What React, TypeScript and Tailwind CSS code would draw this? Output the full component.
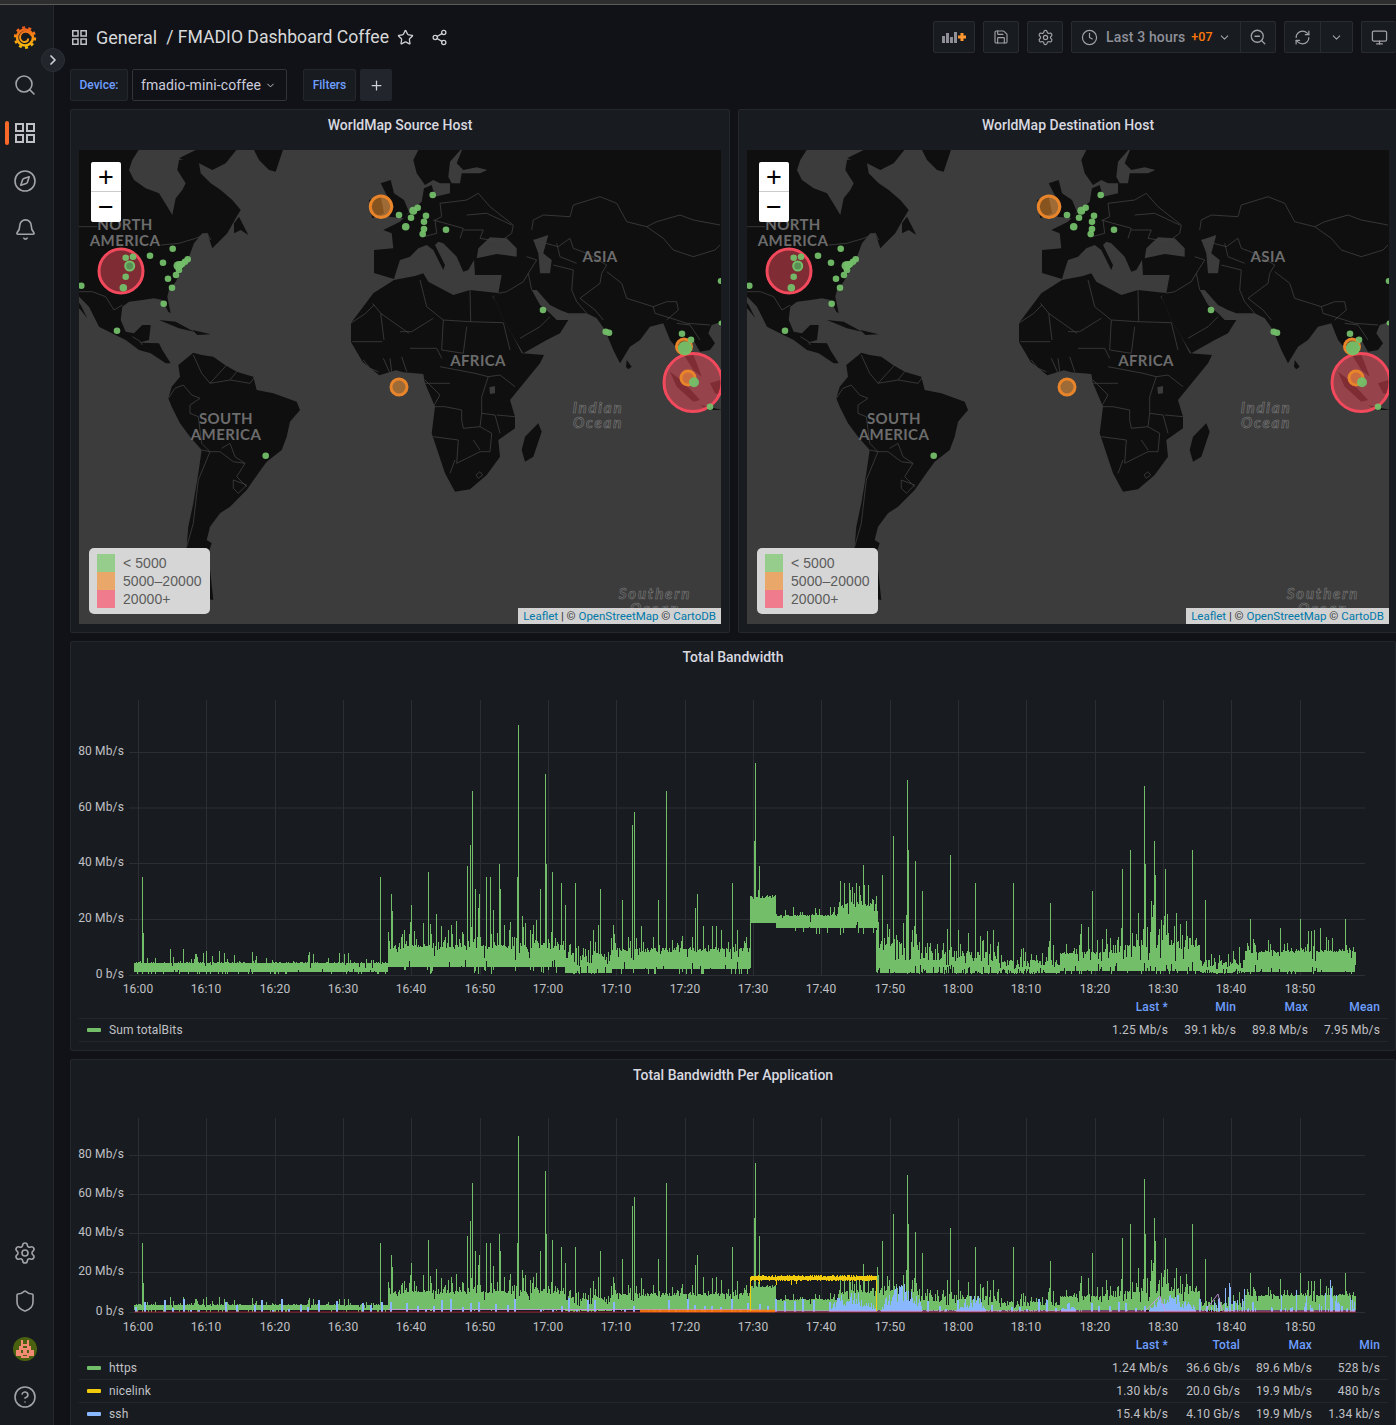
import {
  Bell,
  ChevronDown,
  ChevronRight,
  CircleHelp,
  Clock,
  Compass,
  Monitor,
  Plus,
  RefreshCw,
  Save,
  Search,
  Settings,
  Share2,
  Shield,
  Star,
  ZoomOut,
} from "lucide-react";

type Pt = [number, number];

// crops of the map were read at 3x, so every shape stays in crop coordinates
const pts = (ox: number, oy: number, list: Pt[]) =>
  list.map(([x, y]) => `${(ox + x / 3).toFixed(1)},${(oy + y / 3).toFixed(1)}`).join(" ");

const LAND: string[] = [
  // north america
  pts(79, 150, [[-10, -10], [185, -10], [160, 30], [150, 60], [165, 90], [200, 115], [240, 130], [262, 165], [280, 195], [290, 145], [310, 120], [320, 100], [295, 60], [300, 30], [330, 25], [360, 40], [365, 70], [395, 100], [425, 120], [460, 150], [485, 180], [470, 205], [445, 250], [400, 295], [385, 250], [370, 250], [345, 280], [330, 320], [320, 345], [305, 365], [290, 395], [270, 420], [265, 440], [275, 490], [268, 485], [250, 450], [225, 445], [190, 450], [150, 455], [130, 470], [125, 510], [140, 545], [165, 550], [190, 525], [215, 525], [210, 570], [180, 578], [240, 580], [250, 600], [275, 640], [260, 640], [215, 610], [180, 600], [140, 570], [90, 545], [60, 530], [30, 470], [-10, 430]]),
  pts(79, 150, [[-10, 445], [5, 465], [25, 505], [5, 480], [-10, 465]]),
  pts(79, 150, [[300, 25], [350, 0], [420, -10], [480, -10], [440, 40], [400, 60], [360, 40]]),
  pts(79, 150, [[520, -10], [615, -10], [590, 65], [570, 60], [540, 30]]),
  pts(79, 150, [[465, 220], [480, 200], [508, 255], [485, 240], [465, 250]]),
  pts(79, 150, [[240, 510], [290, 515], [345, 545], [300, 535]]),
  pts(79, 150, [[340, 540], [395, 553], [355, 555]]),
  pts(79, 150, [[905, 100], [935, 90], [945, 130], [975, 150], [990, 185], [975, 205], [930, 200], [945, 170], [920, 130]]),
  pts(79, 150, [[870, 150], [905, 140], [915, 190], [880, 205]]),
  // south america
  pts(130, 340, [[145, 75], [190, 38], [215, 45], [250, 50], [285, 75], [320, 95], [370, 110], [380, 150], [430, 160], [500, 185], [510, 210], [480, 245], [470, 290], [455, 330], [410, 365], [385, 400], [350, 450], [320, 480], [300, 500], [270, 520], [240, 560], [230, 600], [245, 610], [235, 640], [250, 780], [200, 770], [165, 680], [175, 560], [190, 490], [205, 400], [215, 330], [180, 290], [150, 250], [125, 200], [115, 175], [125, 140], [150, 110]]),
  // africa
  pts(400, 300, [[-18, -60], [-80, -20], [-147, 69], [-147, 126], [-112, 186], [-62, 226], [-12, 211], [10, 217], [70, 222], [75, 250], [105, 320], [95, 400], [135, 520], [165, 575], [210, 568], [260, 525], [300, 470], [295, 420], [345, 385], [345, 350], [330, 300], [420, 190], [432, 165], [365, 160], [340, 110], [310, 60], [285, 0], [277, -10], [300, -20], [210, -30], [160, -15], [85, -55], [70, -80], [45, -72]]),
  pts(400, 300, [[415, 370], [425, 395], [400, 470], [375, 485], [365, 450], [375, 410]]),
  // eurasia
  pts(400, 150, [[60, -10], [1000, -10], [1000, 520], [965, 515], [935, 525], [925, 550], [945, 580], [930, 600], [900, 605], [880, 570], [870, 590], [890, 640], [905, 680], [880, 660], [855, 620], [835, 600], [810, 570], [790, 520], [750, 530], [720, 570], [690, 590], [660, 640], [640, 600], [615, 540], [590, 505], [560, 490], [505, 490], [480, 480], [450, 465], [410, 420], [395, 420], [420, 465], [450, 490], [470, 510], [505, 510], [480, 550], [440, 570], [370, 610], [340, 560], [310, 510], [285, 450], [280, 440], [295, 430], [305, 375], [225, 375], [222, 330], [205, 360], [190, 365], [170, 320], [130, 280], [115, 275], [105, 285], [135, 345], [130, 360], [100, 300], [80, 285], [55, 295], [30, 320], [0, 330], [-10, 360], [-18, 387], [-78, 369], [-78, 300], [-20, 295], [-25, 250], [-50, 240], [0, 215], [30, 185], [65, 155], [72, 115], [95, 105], [105, 140], [150, 130], [150, 100], [120, 100], [100, 90], [75, 105], [50, 70], [40, 30]]),
  pts(400, 150, [[680, 630], [695, 650], [685, 658], [678, 650]]),
  pts(400, 300, [[810, 215], [850, 245], [900, 300], [880, 305], [830, 260]]),
  pts(400, 300, [[900, 315], [965, 330], [925, 330]]),
  pts(400, 300, [[930, 250], [990, 230], [990, 290], [945, 280]]),
  pts(400, 150, [[885, 190], [935, 135], [915, 180]]),
];

const WATER: string[] = [
  pts(400, 150, [[235, 295], [270, 262], [320, 265], [350, 295], [350, 320], [290, 312], [230, 325]]),
  pts(400, 150, [[400, 270], [445, 255], [430, 310], [455, 330], [450, 370], [420, 370], [415, 310]]),
  pts(400, 150, [[190, -10], [150, 35], [145, 80], [155, 100], [180, 100], [185, 70], [240, 70], [262, 60], [230, 52], [190, 60], [170, 40]]),
  pts(400, 300, [[268, 262], [285, 258], [285, 280], [270, 282]]),
];

const BORDERS: string[] = [
  pts(79, 150, [[0, 230], [55, 230]]),
  pts(79, 150, [[245, 285], [300, 280], [350, 265], [385, 250], [395, 270]]),
  pts(79, 150, [[0, 425], [40, 425], [80, 440], [105, 480], [130, 465]]),
  pts(79, 150, [[160, 560], [185, 575], [190, 585]]),
  pts(79, 150, [[880, 460], [885, 465], [905, 490], [915, 570]]),
  pts(79, 150, [[815, 520], [860, 490], [885, 465]]),
  pts(79, 150, [[905, 490], [990, 550]]),
  pts(79, 150, [[820, 575], [910, 575]]),
  pts(400, 150, [[120, 160], [125, 200], [105, 210], [110, 250], [65, 262]]),
  pts(400, 150, [[120, 160], [200, 150], [235, 130], [270, 170], [340, 225], [335, 250], [300, 275], [240, 265]]),
  pts(400, 150, [[200, 195], [260, 190], [335, 225]]),
  pts(400, 150, [[190, 240], [250, 240], [240, 265]]),
  pts(400, 150, [[100, 210], [190, 235], [180, 265]]),
  pts(400, 150, [[395, 240], [400, 210], [430, 195], [510, 200], [520, 165], [600, 140], [650, 160], [680, 215], [740, 230]]),
  pts(400, 150, [[740, 230], [770, 215], [840, 195], [880, 210], [960, 225]]),
  pts(400, 150, [[740, 230], [790, 265], [820, 300], [880, 320], [945, 300], [960, 285]]),
  pts(400, 150, [[400, 270], [475, 290], [510, 265], [520, 295], [560, 310], [620, 345], [605, 370]]),
  pts(400, 150, [[470, 280], [480, 320], [530, 340]]),
  pts(400, 150, [[380, 320], [410, 330], [385, 370], [395, 420]]),
  pts(400, 150, [[460, 345], [520, 360], [515, 420], [530, 455], [560, 490]]),
  pts(400, 150, [[605, 370], [600, 400], [540, 445], [585, 480], [610, 510]]),
  pts(400, 150, [[620, 365], [665, 400], [680, 445], [760, 470], [800, 455], [830, 455], [835, 480], [800, 510]]),
  pts(400, 150, [[760, 470], [765, 490], [830, 510], [860, 520], [930, 525]]),
  pts(400, 150, [[830, 520], [870, 525], [900, 570]]),
  pts(400, 150, [[295, 430], [320, 425], [370, 395], [385, 370]]),
  pts(400, 150, [[360, 565], [420, 530], [450, 500]]),
  pts(400, 150, [[60, 390], [80, 470], [130, 510], [210, 515], [310, 518], [330, 600]]),
  pts(400, 150, [[210, 420], [212, 515]]),
  pts(400, 150, [[100, 505], [35, 545], [0, 545]]),
  pts(400, 150, [[130, 510], [125, 600], [190, 610], [200, 530]]),
  pts(400, 300, [[100, 320], [135, 320], [185, 330], [185, 360], [190, 385], [240, 380], [245, 340], [245, 290], [265, 230], [300, 225], [345, 260]]),
  pts(400, 300, [[100, 410], [175, 420], [170, 490], [240, 455], [270, 455], [275, 400], [240, 380]]),
  pts(400, 300, [[245, 340], [285, 345], [300, 400]]),
  pts(400, 300, [[345, 350], [290, 345]]),
  pts(400, 300, [[220, 420], [240, 450]]),
  pts(400, 300, [[120, 200], [225, 220], [265, 230]]),
  pts(400, 300, [[75, 240], [120, 285], [100, 320]]),
  pts(400, 300, [[150, 520], [165, 480]]),
  pts(400, 300, [[228, 525], [240, 515], [248, 525], [235, 535], [228, 525]]),
  pts(130, 340, [[190, 45], [215, 100], [240, 130], [290, 75]]),
  pts(130, 340, [[240, 130], [300, 120], [320, 95]]),
  pts(130, 340, [[300, 120], [360, 130], [375, 110]]),
  pts(130, 340, [[115, 175], [135, 145], [160, 135], [185, 165], [210, 175], [180, 195], [180, 220], [205, 230], [215, 310], [240, 335]]),
  pts(130, 340, [[215, 330], [240, 335], [270, 335], [310, 365], [345, 370], [320, 410], [350, 440]]),
  pts(130, 340, [[275, 325], [300, 310], [315, 350], [345, 370]]),
  pts(130, 340, [[310, 420], [350, 435], [325, 460], [310, 445], [310, 420]]),
  pts(130, 340, [[240, 335], [205, 420], [190, 550], [170, 620]]),
  pts(130, 340, [[700, 60], [720, 85], [745, 95]]),
  pts(130, 340, [[760, 55], [780, 100]]),
  pts(130, 340, [[780, 55], [785, 95]]),
  pts(130, 340, [[815, 50], [830, 95]]),
  pts(130, 340, [[840, 25], [920, 25], [935, 55]]),
  pts(130, 340, [[885, 130], [960, 130]]),
];

// [x, y, r]
const DOTS: number[][] = [
  [172.7, 248.7, 3.3], [150, 255.7, 3.3], [125.7, 257.7, 3.3], [133, 256.7, 3.3], [163, 262.7, 3.3],
  [125.7, 276.7, 3.3], [123.3, 287.7, 3.8], [168, 278.7, 3.3], [172, 287.7, 3.3], [163.7, 303.7, 3.3],
  [176, 275, 3.3], [178, 265.7, 4.5], [180, 265, 4], [182.3, 264, 3.3], [185, 261.7, 3.3], [187.7, 259.3, 3.3],
  [179, 270, 3.3], [81.3, 285.7, 3.3], [117, 330.7, 3.3], [399, 215, 3.3], [432.7, 195, 3.3], [417.7, 207.7, 3.3],
  [413.3, 210.7, 4], [411, 217.7, 3.3], [405.7, 226.7, 3.8], [426, 215.7, 3.3], [424, 221.7, 3.3], [424, 229, 3.3],
  [422.7, 234, 3.3], [446, 229.7, 3.3], [543, 310, 3.3], [605.7, 331.7, 3.3], [609, 332.7, 3.3], [682, 333.7, 3.3],
  [691, 339.7, 3.3], [685, 348.3, 7], [694, 382.3, 5], [710, 406.7, 3.3], [265.7, 455.7, 3.3], [720.7, 281, 3],
  [721, 323, 2.5],
];

const Land = () => (
  <>
    {LAND.map((p, i) => (
      <polygon key={i} points={p} fill="#0f0f0f" />
    ))}
    {WATER.map((p, i) => (
      <polygon key={i} points={p} fill="#3c3c3c" />
    ))}
    {BORDERS.map((p, i) => (
      <polyline key={i} points={p} fill="none" stroke="#404040" strokeWidth="0.8" />
    ))}
  </>
);

function WorldMap() {
  const label = { fontFamily: "Lato, sans-serif", fontWeight: 700, fontSize: 15, fill: "#6c6c6c", textAnchor: "middle" as const, letterSpacing: 0.4 };
  const ocean = { fontFamily: "Lato, sans-serif", fontStyle: "italic", fontWeight: 700, fontSize: 15, fill: "#3c3c3c", stroke: "#7a7a7a", strokeWidth: 0.6, textAnchor: "middle" as const, letterSpacing: 1.8 };
  return (
    <div className="relative h-[474px] w-[642px] overflow-hidden bg-[#3c3c3c]">
      <svg viewBox="79 150 642 474" className="block h-[474px] w-[642px]">
        <Land />
        <text x="125" y="230" {...label}>NORTH</text>
        <text x="125" y="246" {...label}>AMERICA</text>
        <text x="600" y="262" {...label}>ASIA</text>
        <text x="478" y="366" {...label}>AFRICA</text>
        <text x="226" y="424" {...label}>SOUTH</text>
        <text x="226" y="440" {...label}>AMERICA</text>
        <text x="598" y="413" {...ocean}>Indian</text>
        <text x="598" y="428" {...ocean}>Ocean</text>
        <text x="655" y="599" {...ocean}>Southern</text>
        <text x="655" y="614" {...ocean}>Ocean</text>

        <circle cx="121" cy="271" r="22" fill="#f2495c" fillOpacity="0.5" stroke="#f2495c" strokeWidth="3" />
        <circle cx="693" cy="382.5" r="29" fill="#f2495c" fillOpacity="0.5" stroke="#f2495c" strokeWidth="3" />
        <circle cx="381" cy="206.7" r="10.7" fill="#ff9830" fillOpacity="0.5" stroke="#e8842a" strokeWidth="3" />
        <circle cx="399" cy="387" r="8" fill="#ff9830" fillOpacity="0.5" stroke="#e8842a" strokeWidth="3" />
        <circle cx="684" cy="346.5" r="7.5" fill="#ff9830" fillOpacity="0.5" stroke="#e8842a" strokeWidth="3" />
        <circle cx="688" cy="378" r="7" fill="#ff9830" fillOpacity="0.5" stroke="#e8842a" strokeWidth="3" />
        {DOTS.map(([x, y, r], i) => (
          <circle key={i} cx={x} cy={y} r={r} fill="#73bf69" fillOpacity="0.95" />
        ))}
        <circle cx="129.7" cy="266" r="4.5" fill="#5a8f54" stroke="#73bf69" strokeWidth="2" />
      </svg>

      <div className="absolute left-[12px] top-[12px] w-[30px] overflow-hidden rounded-[2px] bg-white text-black">
        <div className="flex h-[30px] items-center justify-center border-b border-[#cccccc] pt-[1px] font-['Liberation_Sans',sans-serif] text-[27px] leading-none">+</div>
        <div className="flex h-[30px] items-center justify-center pt-[1px] font-['Liberation_Sans',sans-serif] text-[27px] leading-none">−</div>
      </div>

      <div className="absolute bottom-[10px] left-[10px] w-[121px] rounded-[5px] bg-[#d6d6d6] px-[8px] py-[6px] font-['Liberation_Sans',sans-serif] text-[14px] leading-[18px] tracking-[0.08px] text-[#5c5c5c]">
        <div className="flex"><i className="mr-[8px] h-[18px] w-[18px] bg-[#96cc8c]" />&lt; 5000</div>
        <div className="flex"><i className="mr-[8px] h-[18px] w-[18px] bg-[#e9a86a]" />5000–20000</div>
        <div className="flex"><i className="mr-[8px] h-[18px] w-[18px] bg-[#f07b8c]" />20000+</div>
      </div>

      <div className="absolute bottom-0 right-0 h-[16px] bg-[#d2d2d2] px-[5px] font-['Roboto',sans-serif] text-[11.5px] leading-[17px] text-[#333333]">
        <span className="text-[#0078a8]">Leaflet</span> | © <span className="text-[#0078a8]">OpenStreetMap</span> © <span className="text-[#0078a8]">CartoDB</span>
      </div>
    </div>
  );
}

/* chart data */

let seed = 48271;
const rnd = () => {
  seed = (seed * 16807) % 2147483647;
  return seed / 2147483647;
};

const SPIKES: Pt[] = [
  [142, 35], [143, 15], [380, 35], [391, 29], [392, 23], [411, 25], [428, 37], [467, 39], [470, 46.6], [472, 66], [475, 31], [479, 29],
  [486, 35], [490, 35], [499, 40], [500, 31], [518, 89.8], [517, 35], [540, 31], [545, 72], [546, 40], [552, 37], [561, 33], [565, 25],
  [575, 33], [600, 31], [622, 27], [632, 54], [634, 58.5], [658, 27], [666, 66], [697, 29], [695, 24], [732, 33], [755, 76], [754, 48], [759, 39],
  [882, 36], [893, 50], [907, 70], [908, 45], [915, 41], [922, 30], [950, 43], [975, 33], [1013, 33], [1050, 26], [1092, 30], [1122, 38],
  [1130, 45], [1144, 68], [1145, 40], [1154, 48], [1155, 36], [1165, 38], [1192, 45], [1205, 27], [1250, 20], [1280, 17], [1300, 20], [1320, 17], [1345, 20],
];

// notch: how often a column falls short of the band, leaving a dark gap
type Band = { from: number; to: number; lo: number; hi: number; jitter: number; chance: number; top: number; notch: number };

const BANDS: Band[] = [
  { from: 134, to: 388, lo: 1.2, hi: 4.4, jitter: 0.4, chance: 0.2, top: 10, notch: 0.05 },
  { from: 388, to: 565, lo: 3, hi: 10, jitter: 2, chance: 0.5, top: 26, notch: 0.06 },
  { from: 565, to: 612, lo: 0.9, hi: 7, jitter: 2, chance: 0.45, top: 20, notch: 0.25 },
  { from: 612, to: 750, lo: 2, hi: 9, jitter: 1.5, chance: 0.45, top: 20, notch: 0.08 },
  { from: 750, to: 776, lo: 18.5, hi: 28, jitter: 1.2, chance: 0.2, top: 34, notch: 0.02 },
  { from: 776, to: 838, lo: 17, hi: 21.5, jitter: 0.6, chance: 0.25, top: 27, notch: 0.02 },
  { from: 838, to: 877, lo: 17, hi: 25, jitter: 2, chance: 0.65, top: 43, notch: 0.04 },
  { from: 877, to: 920, lo: 0.6, hi: 10, jitter: 2.5, chance: 0.55, top: 28, notch: 0.2 },
  { from: 920, to: 1000, lo: 0.7, hi: 8, jitter: 1.5, chance: 0.4, top: 20, notch: 0.35 },
  { from: 1000, to: 1060, lo: 0.6, hi: 5, jitter: 1.2, chance: 0.3, top: 15, notch: 0.35 },
  { from: 1060, to: 1120, lo: 1.6, hi: 8, jitter: 1.2, chance: 0.4, top: 22, notch: 0.1 },
  { from: 1120, to: 1200, lo: 1.6, hi: 10, jitter: 2, chance: 0.6, top: 32, notch: 0.12 },
  { from: 1200, to: 1245, lo: 0.7, hi: 5, jitter: 1.2, chance: 0.3, top: 13, notch: 0.3 },
  { from: 1245, to: 1356, lo: 1.2, hi: 8.5, jitter: 1, chance: 0.35, top: 18, notch: 0.08 },
];

const COLUMNS = BANDS.flatMap((b) => {
  const out: { x: number; lo: number; hi: number }[] = [];
  for (let x = b.from; x < b.to; x++) {
    let lo = b.lo;
    let hi = b.hi + (rnd() - 0.5) * b.jitter;
    const roll = rnd();
    if (roll < 0.1) lo = Math.max(0.2, b.lo - 1 - rnd() * 1.5);
    else if (roll < 0.1 + b.notch) lo = b.lo + (b.hi - b.lo) * 0.4 * rnd();
    const top = rnd();
    if (top < b.chance) hi = b.hi + rnd() * rnd() * (b.top - b.hi);
    else if (top > 1 - b.notch) hi = lo + (hi - lo) * (0.4 + rnd() * 0.4);
    out.push({ x, lo, hi });
  }
  return out;
});
SPIKES.forEach(([x, v]) => {
  const c = COLUMNS.find((col) => col.x === x);
  if (c) c.hi = v;
});

const TOTAL_PATH =
  COLUMNS.map((c) => `M${c.x + 0.5} ${(975 - c.lo * 2.7875).toFixed(1)}V${(975 - c.hi * 2.7875).toFixed(1)}`).join("") +
  "M750.5 968V905M876.5 930V972";

const HTTPS_PATH = COLUMNS.map((c) => {
  const stepped = c.x >= 750 && c.x < 877;
  const isHard = SPIKES.some(([x]) => x === c.x);
  const hi = isHard ? c.hi : stepped ? Math.max(3, c.hi - 15) : c.x < 388 ? c.hi * 0.85 : c.hi;
  const lo = stepped ? 0.6 : Math.min(c.lo, 1.6) * 0.8;
  return `M${c.x + 0.5} ${(1312 - lo * 1.96).toFixed(1)}V${(1312 - hi * 1.96).toFixed(1)}`;
}).join("");

const blueHumps: number[][] = [
  [830, 877, 850, 11], [880, 922, 905, 14.6], [955, 986, 975, 8.6], [1060, 1076, 1068, 5], [1148, 1196, 1170, 10],
];
let bluePath = "";
let blueTicks = "";
for (let x = 134; x < 1356; x++) {
  const hump = blueHumps.find(([a, b]) => x >= a && x < b);
  if (hump) {
    const [a, b, peak, h] = hump;
    const d = x < peak ? (x - a) / (peak - a) : (b - x) / (b - peak);
    const v = h * Math.sqrt(d) * (0.3 + rnd() * 0.8);
    bluePath += `M${x + 0.5} 1311.5V${(1312 - v * 1.96).toFixed(1)}`;
  } else if (x >= 1210 && rnd() < 0.3) {
    const v = 1.5 + rnd() * rnd() * 17;
    bluePath += `M${x + 0.5} 1311.5V${(1312 - v * 1.96).toFixed(1)}`;
  } else if (x % 9 === 0 && rnd() < 0.8) {
    const v = 1 + rnd() * 6;
    blueTicks += `M${x + Math.floor(rnd() * 4) + 0.5} 1311.5V${(1312 - v * 1.96).toFixed(1)}`;
  }
}

let yellowPath = "M750.5 1311V1278M876.5 1311V1278";
for (let x = 750; x < 877; x++) {
  const a = 1275 + rnd() * 1.6;
  const b = 1279.5 + rnd() * 1.6 + (rnd() < 0.03 ? 4 : 0);
  yellowPath += `M${x + 0.5} ${a.toFixed(1)}V${b.toFixed(1)}`;
}

const TIME_LABELS = ["16:00", "16:10", "16:20", "16:30", "16:40", "16:50", "17:00", "17:10", "17:20", "17:30", "17:40", "17:50", "18:00", "18:10", "18:20", "18:30", "18:40", "18:50"];
const axisText = { fontFamily: "Roboto, sans-serif", fontSize: 12, fill: "#c0c1c6", letterSpacing: 0.15 };

function Axes({ top, rows, labelY }: { top: number; rows: { y: number; text: string }[]; labelY: number }) {
  const bottom = rows[rows.length - 1].y;
  return (
    <>
      {TIME_LABELS.map((t, i) => {
        const x = Math.round(138 + i * 68.33) + 0.5;
        return (
          <g key={t}>
            <line x1={x} x2={x} y1={top} y2={bottom} stroke="#2b2e33" />
            <text x={x - 0.5} y={labelY} textAnchor="middle" {...axisText}>{t}</text>
          </g>
        );
      })}
      {rows.map((r) => (
        <g key={r.text}>
          <line x1="129" x2="1365" y1={r.y + 0.5} y2={r.y + 0.5} stroke="#2b2e33" />
          <text x="124" y={r.y + 3} textAnchor="end" {...axisText}>{r.text}</text>
        </g>
      ))}
    </>
  );
}

function TotalChart() {
  return (
    <svg viewBox="71 674 1324 324" className="block h-[324px] w-[1324px]">
      <Axes
        top={700}
        labelY={993}
        rows={[
          { y: 752, text: "80 Mb/s" },
          { y: 807.5, text: "60 Mb/s" },
          { y: 863, text: "40 Mb/s" },
          { y: 919, text: "20 Mb/s" },
          { y: 975, text: "0 b/s" },
        ]}
      />
      <path d={TOTAL_PATH} stroke="#73bf69" strokeWidth="1" fill="none" shapeRendering="crispEdges" />
    </svg>
  );
}

function AppChart() {
  return (
    <svg viewBox="71 1092 1324 244" className="block h-[244px] w-[1324px]">
      <Axes
        top={1118}
        labelY={1331}
        rows={[
          { y: 1155, text: "80 Mb/s" },
          { y: 1194, text: "60 Mb/s" },
          { y: 1233, text: "40 Mb/s" },
          { y: 1272, text: "20 Mb/s" },
          { y: 1312, text: "0 b/s" },
        ]}
      />
      <path d={HTTPS_PATH} stroke="#73bf69" strokeWidth="1" fill="none" shapeRendering="crispEdges" />
      <path d={blueTicks} stroke="#8ab8ff" strokeWidth="2" fill="none" shapeRendering="crispEdges" />
      <path d={bluePath} stroke="#8ab8ff" strokeWidth="1" fill="none" shapeRendering="crispEdges" />
      <path d="M388 1309.5H750L776 1311H1145L1160 1296L1165 1311H1205L1218 1294L1222 1311H1356" stroke="#ca95e5" strokeWidth="1" fill="none" opacity="0.85" />
      <path d="M134 1312H1356" stroke="#c4162a" strokeWidth="1" opacity="0.7" />
      <path d="M640 1311H775" stroke="#ff780a" strokeWidth="2.5" opacity="0.9" />
      <path d={yellowPath} stroke="#f2cc0c" strokeWidth="1" fill="none" shapeRendering="crispEdges" />
    </svg>
  );
}

function LegendRow({ name, color, cells, widths, head }: { name?: string; color?: string; cells: string[]; widths: string[]; head?: boolean }) {
  return (
    <div className={head ? "flex h-[21px] items-center border-b border-[#24272c] pb-[2px] pr-[8px] text-[12px] font-medium tracking-[0.15px] text-[#6e9fff]" : "flex h-[23px] items-center border-b border-[#24272c] pr-[8px] text-[12px] tracking-[0.15px] text-[#c0c1c6]"}>
      <div className="flex flex-1 items-center">
        {name && <i className={`ml-[8px] mr-[8px] h-[4px] w-[14px] rounded-[1px] ${color}`} />}
        {name}
      </div>
      {cells.map((c, i) => (
        <div key={i} className={`${widths[i]} text-right`}>{c}</div>
      ))}
    </div>
  );
}

const PanelTitle = ({ children }: { children: string }) => (
  <div className="mb-[2px] flex h-[30px] items-center justify-center text-[14px] font-medium text-[#d8d9e0]">{children}</div>
);

const Grid4 = ({ className }: { className: string }) => (
  <svg viewBox="0 0 20 20" className={className} fill="none" stroke="currentColor" strokeWidth="2">
    <rect x="1" y="1" width="7" height="7" />
    <rect x="12" y="1" width="7" height="7" />
    <rect x="1" y="12" width="7" height="7" />
    <rect x="12" y="12" width="7" height="7" />
  </svg>
);

const GrafanaLogo = () => (
  <svg viewBox="0 0 24 24" className="h-[24px] w-[24px]" fill="none">
    <defs>
      <linearGradient id="gf" x1="0" y1="24" x2="0" y2="0" gradientUnits="userSpaceOnUse">
        <stop offset="0" stopColor="#fbca0a" />
        <stop offset="1" stopColor="#f0501f" />
      </linearGradient>
    </defs>
    <circle cx="12" cy="12.5" r="10" stroke="url(#gf)" strokeWidth="2.4" strokeDasharray="3 3.28" />
    <circle cx="12" cy="12.5" r="8" stroke="url(#gf)" strokeWidth="2.6" />
    <path d="M19 11c-1.500-3-4-4.600-7-4.300a5.800 5.800 0 0 0-5 5.800 5 5 0 0 0 5 4.500 3.400 3.400 0 0 0 3.200-3.400" stroke="url(#gf)" strokeWidth="2" />
  </svg>
);

const Avatar = () => (
  <svg viewBox="0 0 24 24" className="h-[24px] w-[24px] rounded-full" shapeRendering="crispEdges">
    <rect width="24" height="24" fill="#4a610f" />
    <path d="M8 3h2v4h4V3h2v6h2v4h3v6h-5v2H8v-2H3v-6h3V9h2z" fill="#f38a73" />
    <path d="M10 9h4v2h-4zM8 13h2v3H8zM14 13h2v3h-2zM10 18h4v1h-4z" fill="#4a610f" />
  </svg>
);

const NavItem = ({ children }: { children: React.ReactNode }) => (
  <div className="relative flex h-[48px] items-center justify-center pr-[3px] text-[#a3a4a9]">{children}</div>
);

const btn = "flex h-[32px] items-center justify-center rounded-[2px] border border-[#282b30] bg-[#181b1f] text-[#a0a1a8]";

export default function App() {
  return (
    <div className="h-[1425px] w-[1396px] overflow-hidden bg-[#111217] font-['Roboto',sans-serif] text-[#ccccdc]">
      <div className="h-[5px] border-b border-[#5b5b5b] bg-[#2e2e2e]" />
      <div className="flex">
        <aside className="relative flex h-[1420px] w-[54px] shrink-0 flex-col border-r border-[#24272b] bg-[#181b1f]">
          <div className="flex h-[56px] items-start justify-center pr-[3px] pt-[20px]">
            <GrafanaLogo />
          </div>
          <NavItem><Search className="h-[24px] w-[24px]" strokeWidth={1.6} /></NavItem>
          <NavItem>
            <span className="absolute left-[5px] top-[12px] h-[24px] w-[4px] rounded-[2px] bg-[#f8692a]" />
            <Grid4 className="h-[20px] w-[20px] text-[#c0c1c6]" />
          </NavItem>
          <NavItem><Compass className="h-[24px] w-[24px]" strokeWidth={1.6} /></NavItem>
          <NavItem><Bell className="h-[23px] w-[23px]" strokeWidth={1.7} /></NavItem>
          <div className="mt-auto pb-[4px]">
            <NavItem><Settings className="h-[24px] w-[24px]" strokeWidth={1.6} /></NavItem>
            <NavItem><Shield className="h-[24px] w-[24px]" strokeWidth={1.6} /></NavItem>
            <NavItem><Avatar /></NavItem>
            <NavItem><CircleHelp className="h-[24px] w-[24px]" strokeWidth={1.6} /></NavItem>
          </div>
          <div className="absolute left-[41px] top-[43px] z-10 flex h-[24px] w-[24px] items-center justify-center rounded-full border border-[#2c2f35] bg-[#22252b] text-[#d0d1d6]">
            <ChevronRight className="h-[16px] w-[16px]" strokeWidth={2.6} />
          </div>
        </aside>

        <main className="min-w-0 flex-1 pl-[16px]">
          <header className="flex h-[48px] items-start pt-[16px]">
            <div className="flex h-[32px] items-center">
              <Grid4 className="ml-[2px] h-[15px] w-[15px] text-[#c0c1c6]" />
              <span className="ml-[9px] text-[18px] text-[#d8d9da]">General</span>
              <span className="ml-[9px] text-[17.6px] text-[#d8d9da]">/ FMADIO Dashboard Coffee</span>
              <Star className="ml-[8px] h-[17px] w-[17px] text-[#d0d1d6]" strokeWidth={1.8} />
              <Share2 className="ml-[17px] h-[17px] w-[17px] text-[#d0d1d6]" strokeWidth={1.8} />
            </div>
            <div className="ml-auto flex shrink-0 gap-[8px]">
              <div className={`${btn} w-[42px]`}>
                <svg viewBox="0 0 24 12" className="h-[12px] w-[24px]">
                  <path d="M0 5h3v7H0zM4 2h3v10H4zM8 6h3v6H8zM12 1h3v11h-3z" fill="#8f9097" />
                  <path d="M18.500 2h3v2.500H24v3h-2.500V10h-3V7.500H16v-3h2.500z" fill="#ff9830" />
                </svg>
              </div>
              <div className={`${btn} w-[36px]`}><Save className="h-[16px] w-[16px]" strokeWidth={1.7} /></div>
              <div className={`${btn} w-[36px]`}><Settings className="h-[17px] w-[17px]" strokeWidth={1.7} /></div>
              <div className="flex h-[32px] rounded-[2px] border border-[#282b30] bg-[#181b1f] text-[#a0a1a8]">
                <div className="flex w-[168px] items-center pl-[9px]">
                  <Clock className="h-[17px] w-[17px]" strokeWidth={1.7} />
                  <span className="ml-[8px] text-[14px] font-medium tracking-[0.15px] text-[#8e9099]">Last 3 hours</span>
                  <span className="ml-[6px] text-[12.5px] font-medium text-[#ff780a]">+07</span>
                  <ChevronDown className="ml-[5px] h-[13px] w-[13px]" strokeWidth={2} />
                </div>
                <div className="flex w-[35px] items-center justify-center border-l border-[#282b30]"><ZoomOut className="h-[18px] w-[18px]" strokeWidth={1.7} /></div>
              </div>
              <div className="flex h-[32px] rounded-[2px] border border-[#282b30] bg-[#181b1f] text-[#a0a1a8]">
                <div className="flex w-[35px] items-center justify-center"><RefreshCw className="h-[17px] w-[17px]" strokeWidth={1.7} /></div>
                <div className="flex w-[32px] items-center justify-center border-l border-[#282b30]"><ChevronDown className="h-[13px] w-[13px]" strokeWidth={2} /></div>
              </div>
              <div className={`${btn} w-[35px] border-r-0`}><Monitor className="h-[17px] w-[17px]" strokeWidth={1.8} /></div>
            </div>
          </header>

          <div className="mt-[16px] flex h-[32px] items-stretch">
            <div className="flex w-[58px] items-center justify-center rounded-[2px] border border-[#24272c] bg-[#181b1f] text-[12px] font-medium text-[#6e9fff]">Device:</div>
            <div className="ml-[4px] flex w-[155px] items-center rounded-[2px] border border-[#303339] pl-[8px] text-[14px] tracking-[0.1px] text-[#ccccdc]">
              fmadio-mini-coffee
              <ChevronDown className="ml-[4px] h-[11px] w-[11px]" strokeWidth={2} />
            </div>
            <div className="ml-[16px] flex w-[53px] items-center justify-center rounded-[2px] border border-[#24272c] bg-[#181b1f] text-[12px] font-medium text-[#6e9fff]">Filters</div>
            <div className="ml-[4px] flex w-[32px] items-center justify-center rounded-[2px] bg-[#22252b] text-[#d0d1d6]">
              <Plus className="h-[15px] w-[15px]" strokeWidth={2} />
            </div>
          </div>

          <div className="mt-[8px] flex w-[1328px] gap-[8px]">
            <section className="h-[524px] w-[660px] shrink-0 rounded-[2px] border border-[#24272c] bg-[#181b1f]">
              <PanelTitle>WorldMap Source Host</PanelTitle>
              <div className="pl-[8px] pt-[8px]"><WorldMap /></div>
            </section>
            <section className="h-[524px] w-[660px] shrink-0 rounded-[2px] border border-[#24272c] bg-[#181b1f]">
              <PanelTitle>WorldMap Destination Host</PanelTitle>
              <div className="pl-[8px] pt-[8px]"><WorldMap /></div>
            </section>
          </div>

          <section className="mt-[8px] h-[410px] w-[1326px] rounded-[2px] border border-[#24272c] bg-[#181b1f]">
            <PanelTitle>Total Bandwidth</PanelTitle>
            <TotalChart />
            <div className="ml-[8px] mr-[7px]">
              <LegendRow head cells={["Last *", "Min", "Max", "Mean"]} widths={["w-[68px]", "w-[68px]", "w-[72px]", "w-[72px]"]} />
              <LegendRow name="Sum totalBits" color="bg-[#73bf69]" cells={["1.25 Mb/s", "39.1 kb/s", "89.8 Mb/s", "7.95 Mb/s"]} widths={["w-[68px]", "w-[68px]", "w-[72px]", "w-[72px]"]} />
            </div>
          </section>

          <section className="mt-[8px] h-[380px] w-[1326px] rounded-[2px] border border-[#24272c] bg-[#181b1f]">
            <PanelTitle>Total Bandwidth Per Application</PanelTitle>
            <AppChart />
            <div className="ml-[8px] mr-[7px]">
              <LegendRow head cells={["Last *", "Total", "Max", "Min"]} widths={["w-[72px]", "w-[72px]", "w-[72px]", "w-[68px]"]} />
              <LegendRow name="https" color="bg-[#73bf69]" cells={["1.24 Mb/s", "36.6 Gb/s", "89.6 Mb/s", "528 b/s"]} widths={["w-[72px]", "w-[72px]", "w-[72px]", "w-[68px]"]} />
              <LegendRow name="nicelink" color="bg-[#f2cc0c]" cells={["1.30 kb/s", "20.0 Gb/s", "19.9 Mb/s", "480 b/s"]} widths={["w-[72px]", "w-[72px]", "w-[72px]", "w-[68px]"]} />
              <LegendRow name="ssh" color="bg-[#8ab8ff]" cells={["15.4 kb/s", "4.10 Gb/s", "19.9 Mb/s", "1.34 kb/s"]} widths={["w-[72px]", "w-[72px]", "w-[72px]", "w-[68px]"]} />
            </div>
          </section>
        </main>
      </div>
    </div>
  );
}
